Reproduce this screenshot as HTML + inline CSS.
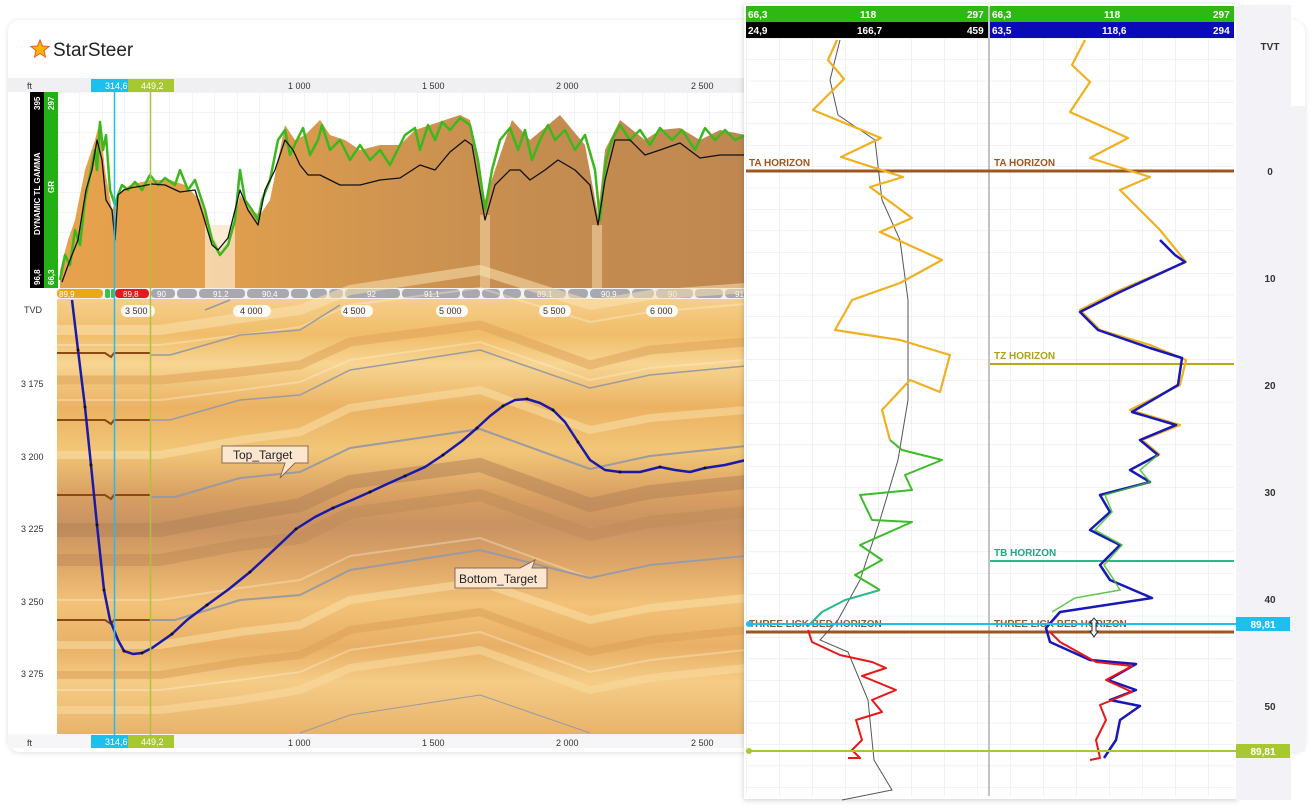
<!DOCTYPE html>
<html><head><meta charset="utf-8">
<style>
html,body{margin:0;padding:0;background:#fff;}
body{width:1314px;height:811px;position:relative;overflow:hidden;font-family:"Liberation Sans",sans-serif;}
.card{position:absolute;left:8px;top:20px;width:1297px;height:732px;background:#fff;border-radius:12px;box-shadow:0 1px 6px rgba(0,0,0,.12);overflow:hidden;}
svg text{font-family:"Liberation Sans",sans-serif;}
</style></head><body>
<div class="card"></div>
<svg width="1314" height="811" style="position:absolute;left:0;top:0">
<defs>
<linearGradient id="gfill" x1="0" y1="0" x2="1" y2="0">
<stop offset="0" stop-color="#e6a14c"/><stop offset=".2" stop-color="#e2a04c"/><stop offset=".5" stop-color="#cf9450"/><stop offset=".7" stop-color="#c58c50"/><stop offset="1" stop-color="#c08850"/>
</linearGradient>
<pattern id="grid" width="33" height="21.4" patternUnits="userSpaceOnUse" x="746" y="38">
<path d="M0 0H33M0 0V21.4" stroke="#e6e4e6" stroke-width="1" fill="none"/>
</pattern>
<pattern id="lgrid" width="22.5" height="20" patternUnits="userSpaceOnUse" x="57" y="92">
<path d="M0 0H22.5M0 0V20" stroke="#e9e9ec" stroke-width="1" fill="none"/>
</pattern>
<linearGradient id="strata" x1="0" y1="0" x2="0" y2="1">
<stop offset="0" stop-color="#f6cf8a"/><stop offset=".08" stop-color="#f0bd6a"/><stop offset=".15" stop-color="#f7d592"/><stop offset=".25" stop-color="#ebb262"/><stop offset=".35" stop-color="#f2c678"/><stop offset=".45" stop-color="#d9a062"/><stop offset=".52" stop-color="#c89262"/><stop offset=".6" stop-color="#dca466"/><stop offset=".7" stop-color="#f2c278"/><stop offset=".8" stop-color="#e8b066"/><stop offset=".88" stop-color="#f5cc86"/><stop offset="1" stop-color="#e8b36c"/>
</linearGradient>
</defs>

<polygon points="40,40 42.5,46 49,46.5 44,50.5 45.5,57 40,53.5 34.5,57 36,50.5 31,46.5 37.5,46" fill="#f7b500" stroke="#f05a22" stroke-width="1"/>
<text x="53" y="56" font-size="19" fill="#222">StarSteer</text>

<rect x="8" y="78" width="740" height="14" fill="#f0f0f2"/>
<text x="27" y="89" font-size="9" fill="#333">ft</text>
<rect x="91" y="79" width="37" height="13" fill="#1ebfee"/><rect x="128" y="79" width="46" height="13" fill="#a8c832"/>
<text x="105" y="89" font-size="9" fill="#fff">314,6</text><text x="141" y="89" font-size="9" fill="#fff">449,2</text>
<g font-size="9" fill="#333"><text x="288" y="89">1 000</text><text x="422" y="89">1 500</text><text x="556" y="89">2 000</text><text x="691" y="89">2 500</text></g>

<rect x="57" y="92" width="689" height="196" fill="url(#lgrid)"/>
<rect x="30" y="92" width="14" height="196" fill="#000"/>
<rect x="44" y="92" width="14" height="196" fill="#22b014"/>
<g font-size="8" fill="#fff" font-weight="bold">
<text transform="translate(40,235) rotate(-90)">DYNAMIC TL GAMMA</text>
<text transform="translate(40,110) rotate(-90)">395</text>
<text transform="translate(40,285) rotate(-90)">96,8</text>
<text transform="translate(54,110) rotate(-90)">297</text>
<text transform="translate(54,193) rotate(-90)">GR</text>
<text transform="translate(54,285) rotate(-90)">66,3</text>
</g>
<path d="M60,288 L60,270 L68,240 L75,220 L85,170 L95,140 L100,120 L105,170 L112,210 L117,200 L122,190 L130,185 L150,180 L170,180 L185,185 L200,200 L210,230 L220,250 L230,240 L240,195 L250,210 L260,215 L270,200 L285,125 L295,140 L305,135 L320,120 L330,135 L345,140 L360,150 L380,145 L400,145 L415,130 L430,125 L460,115 L470,120 L485,200 L495,170 L512,120 L530,140 L548,125 L560,115 L585,145 L598,215 L605,150 L620,120 L645,140 L660,130 L680,128 L700,140 L720,130 L746,135 L746,288 Z" fill="url(#gfill)"/>
<rect x="205" y="225" width="30" height="63" fill="#fbe6c6" opacity=".75"/>
<rect x="480" y="215" width="10" height="73" fill="#f3d3a0" opacity=".6"/>
<rect x="592" y="225" width="10" height="63" fill="#f3d3a0" opacity=".6"/>
<path d="M60,280 L65,255 L70,265 L75,230 L80,245 L85,200 L90,175 L95,150 L97,170 L100,122 L103,150 L106,135 L110,190 L115,205 L118,195 L122,185 L128,190 L135,182 L142,190 L150,175 L158,185 L165,178 L175,185 L180,170 L188,190 L195,180 L200,195 L205,210 L212,240 L220,255 L228,245 L235,220 L240,170 L245,200 L252,210 L258,220 L262,200 L270,180 L278,140 L285,130 L290,155 L297,140 L303,128 L310,155 L318,140 L322,125 L330,150 L340,140 L350,160 L360,145 L370,160 L380,150 L390,165 L400,145 L405,135 L415,128 L420,150 L428,125 L435,140 L442,122 L450,130 L460,118 L470,125 L478,160 L485,210 L492,170 L500,140 L510,128 L518,150 L525,130 L532,160 L540,140 L548,125 L555,140 L565,130 L575,150 L585,135 L595,170 L600,220 L606,160 L612,140 L620,125 L630,140 L640,130 L650,145 L660,128 L672,140 L682,130 L695,150 L705,128 L715,140 L725,130 L735,140 L746,135" fill="none" stroke="#3cb81e" stroke-width="2.5" stroke-linejoin="round"/>
<path d="M62,282 L70,260 L78,240 L86,190 L92,170 L97,140 L102,160 L106,200 L112,210 L115,240 L118,195 L124,190 L130,188 L142,186 L152,184 L165,185 L180,192 L195,190 L203,215 L212,245 L218,250 L228,238 L240,190 L248,210 L258,225 L265,190 L275,170 L285,140 L293,150 L300,165 L308,175 L320,175 L340,185 L360,185 L380,180 L400,178 L420,165 L435,170 L450,152 L465,140 L472,145 L485,220 L495,185 L510,170 L520,170 L530,180 L545,170 L558,160 L575,170 L590,185 L598,225 L605,180 L615,140 L630,140 L645,155 L660,150 L680,143 L700,158 L720,155 L746,155" fill="none" stroke="#111" stroke-width="1.3" stroke-linejoin="round"/>

<rect x="57" y="288" width="689" height="11" fill="#f2f2f4"/>
<g font-size="8" fill="#fff">
<rect x="57" y="289" width="46" height="9" rx="4" fill="#e8a81a"/><text x="59" y="297">89,9</text>
<rect x="105" y="289" width="5" height="9" rx="2" fill="#3cc04a"/><rect x="111" y="289" width="3" height="9" rx="1" fill="#3cc04a"/>
<rect x="115" y="289" width="34" height="9" rx="4" fill="#e51a1a"/><text x="123" y="297">89,8</text>
<g fill="#a8a8ae">
<rect x="151" y="289" width="24" height="9" rx="4"/><rect x="177" y="289" width="20" height="9" rx="4"/><rect x="199" y="289" width="46" height="9" rx="4"/><rect x="247" y="289" width="42" height="9" rx="4"/><rect x="291" y="289" width="17" height="9" rx="4"/><rect x="310" y="289" width="17" height="9" rx="4"/><rect x="329" y="289" width="14" height="9" rx="4"/><rect x="345" y="289" width="55" height="9" rx="4"/><rect x="402" y="289" width="58" height="9" rx="4"/><rect x="462" y="289" width="18" height="9" rx="4"/><rect x="482" y="289" width="18" height="9" rx="4"/><rect x="503" y="289" width="18" height="9" rx="4"/><rect x="524" y="289" width="42" height="9" rx="4"/><rect x="568" y="289" width="20" height="9" rx="4"/><rect x="590" y="289" width="40" height="9" rx="4"/><rect x="632" y="289" width="22" height="9" rx="4"/><rect x="656" y="289" width="37" height="9" rx="4"/><rect x="695" y="289" width="28" height="9" rx="4"/><rect x="725" y="289" width="21" height="9" rx="4"/>
</g>
<text x="157" y="297">90</text><text x="213" y="297">91,2</text><text x="262" y="297">90,4</text><text x="367" y="297">92</text><text x="424" y="297">91,1</text><text x="537" y="297">89,1</text><text x="601" y="297">90,9</text><text x="668" y="297">90</text><text x="735" y="297">91</text>
</g>

<rect x="57" y="299" width="689" height="435" fill="url(#strata)"/>
<g fill="none" stroke-linejoin="round" opacity=".55">
<path d="M57,330 H160 L240,318 L300,310 L350,290 L480,270 L590,305 L650,295 L746,288" stroke="#fbe2b0" stroke-width="10"/>
<path d="M57,380 H160 L240,372 L300,365 L350,342 L480,325 L590,365 L650,350 L746,342" stroke="#e0a35a" stroke-width="9"/>
<path d="M57,455 H160 L240,440 L300,432 L350,408 L480,390 L590,430 L650,418 L746,410" stroke="#fae0a8" stroke-width="8"/>
<path d="M57,530 H160 L240,515 L300,505 L350,482 L480,465 L590,505 L650,492 L746,482" stroke="#b58458" stroke-width="14"/>
<path d="M57,560 H160 L240,545 L300,538 L350,513 L480,495 L590,535 L650,522 L746,512" stroke="#c08c5a" stroke-width="12"/>
<path d="M57,645 H160 L240,632 L300,625 L350,600 L480,582 L590,620 L650,608 L746,598" stroke="#fbe0a6" stroke-width="8"/>
<path d="M57,675 H160 L240,662 L300,655 L350,630 L480,612 L590,652 L650,640 L746,630" stroke="#dca15a" stroke-width="8"/>
<path d="M57,710 H160 L240,700 L300,690 L350,668 L480,650 L590,690 L650,678 L746,668" stroke="#fbdca0" stroke-width="8"/>
</g>
<g fill="none" stroke-linejoin="round" opacity=".35" stroke="#fff3d6" stroke-width="2">
<path d="M57,345 H160 L240,335 L300,327 L350,305 L480,288 L590,322 L650,312 L746,304"/>
<path d="M57,400 H160 L240,390 L300,382 L350,360 L480,342 L590,380 L650,368 L746,360"/>
<path d="M57,600 H160 L240,588 L300,580 L350,556 L480,538 L590,578 L650,565 L746,556"/>
<path d="M57,690 H160 L240,680 L300,672 L350,650 L480,632 L590,672 L650,660 L746,650"/>
</g>
<g fill="none" stroke="#9a9aa2" stroke-linejoin="round">
<path d="M205,310 L230,300" stroke-width="1.5"/>
<path d="M150,355 H170 L240,335 L300,330 L340,305" stroke-width="1.5"/>
<path d="M150,420 H170 L240,400 L300,395 L350,370 L480,350 L590,388 L650,375 L746,366" stroke-width="1.5"/>
<path d="M150,497 H175 L240,478 L300,472 L350,448 L480,429 L590,469 L650,456 L746,446" stroke-width="2"/>
<path d="M150,620 H175 L240,600 L300,595 L350,570 L480,550 L590,578 L650,565 L746,556" stroke-width="2"/>
<path d="M300,733 L350,715 L480,695 L590,733" stroke-width="1"/>
</g>
<g fill="none" stroke="#8b4a14" stroke-width="2">
<path d="M57,353 H105 L111,357 L114,353 H150"/><path d="M57,420 H105 L111,424 L114,420 H150"/><path d="M57,495 H105 L111,499 L114,495 H150"/><path d="M57,620 H105 L111,624 L114,620 H150"/>
</g>
<g fill="#fff" opacity=".9">
<rect x="121" y="305" width="34" height="12" rx="6"/><rect x="233" y="305" width="38" height="12" rx="6"/><rect x="341" y="305" width="32" height="12" rx="6"/><rect x="436" y="305" width="32" height="12" rx="6"/><rect x="539" y="305" width="32" height="12" rx="6"/><rect x="646" y="305" width="32" height="12" rx="6"/>
</g>
<g font-size="9" fill="#333"><text x="125" y="314">3 500</text><text x="240" y="314">4 000</text><text x="343" y="314">4 500</text><text x="439" y="314">5 000</text><text x="543" y="314">5 500</text><text x="650" y="314">6 000</text></g>
<g font-size="9" fill="#333"><text x="24" y="313">TVD</text><text x="21" y="387">3 175</text><text x="21" y="460">3 200</text><text x="21" y="532">3 225</text><text x="21" y="605">3 250</text><text x="21" y="677">3 275</text></g>

<g font-size="12" fill="#222">
<path d="M222,446 H308 V463 H295 L280,478 L285,463 H222 Z" fill="#fde6d0" stroke="#8a6a50" stroke-width="1"/>
<text x="233" y="459">Top_Target</text>
<path d="M455,568 H520 L535,560 L532,568 H547 V588 H455 Z" fill="#fde6d0" stroke="#8a6a50" stroke-width="1"/>
<text x="459" y="583">Bottom_Target</text>
</g>

<path d="M72,300 L78,350 L85,407 L91,465 L97,525 L104,590 L110,620 L118,640 L124,651 L133,654 L142,653 L152,648 L162,641 L172,634 L187,620 L207,605 L229,589 L250,572 L263,560 L278,546 L296,529 L315,517 L333,508 L352,500 L370,492 L385,485 L405,476 L425,467 L443,455 L462,441 L477,428 L490,416 L503,406 L515,400 L527,399 L540,403 L553,410 L565,422 L578,442 L590,460 L605,470 L620,472 L640,472 L660,467 L675,470 L690,472 L705,468 L725,465 L746,460" fill="none" stroke="#1a1aa8" stroke-width="2.5" stroke-linejoin="round"/>
<g fill="#111">
<circle cx="78" cy="350" r="1.5"/><circle cx="85" cy="407" r="1.5"/><circle cx="91" cy="465" r="1.5"/><circle cx="97" cy="525" r="1.5"/><circle cx="104" cy="590" r="1.5"/><circle cx="124" cy="651" r="1.5"/><circle cx="142" cy="653" r="1.5"/><circle cx="172" cy="634" r="1.5"/><circle cx="207" cy="605" r="1.5"/><circle cx="250" cy="572" r="1.5"/><circle cx="296" cy="529" r="1.5"/><circle cx="333" cy="508" r="1.5"/><circle cx="370" cy="492" r="1.5"/><circle cx="405" cy="476" r="1.5"/><circle cx="443" cy="455" r="1.5"/><circle cx="477" cy="428" r="1.5"/><circle cx="503" cy="406" r="1.5"/><circle cx="527" cy="399" r="1.5"/><circle cx="553" cy="410" r="1.5"/><circle cx="578" cy="442" r="1.5"/><circle cx="620" cy="472" r="1.5"/><circle cx="660" cy="467" r="1.5"/><circle cx="705" cy="468" r="1.5"/>
</g>

<rect x="8" y="734" width="740" height="14" fill="#f6f6f8"/>
<text x="27" y="746" font-size="9" fill="#333">ft</text>
<rect x="91" y="735" width="37" height="13" fill="#1ebfee"/><rect x="128" y="735" width="46" height="13" fill="#a8c832"/>
<text x="105" y="745" font-size="9" fill="#fff">314,6</text><text x="141" y="745" font-size="9" fill="#fff">449,2</text>
<g font-size="9" fill="#333"><text x="288" y="746">1 000</text><text x="422" y="746">1 500</text><text x="556" y="746">2 000</text><text x="691" y="746">2 500</text></g>

<line x1="114.5" y1="92" x2="114.5" y2="736" stroke="#1ebfee" stroke-width="1.5"/>
<line x1="150.5" y1="92" x2="150.5" y2="736" stroke="#a8c832" stroke-width="1.5"/>

<rect x="744" y="4" width="494" height="795" fill="#fff" style="filter:drop-shadow(0 1px 3px rgba(0,0,0,.2))"/>
<rect x="746" y="38" width="488" height="758" fill="url(#grid)"/>
<line x1="989" y1="7" x2="989" y2="796" stroke="#c4c2c4" stroke-width="2"/>
<rect x="746" y="6" width="242" height="16" fill="#2eb812"/><rect x="990" y="6" width="244" height="16" fill="#2eb812"/>
<rect x="746" y="22" width="242" height="16" fill="#000"/><rect x="990" y="22" width="244" height="16" fill="#0a0ab8"/>
<g font-size="10" fill="#fff" font-weight="bold">
<text x="748" y="18">66,3</text><text x="860" y="18">118</text><text x="967" y="18">297</text>
<text x="992" y="18">66,3</text><text x="1104" y="18">118</text><text x="1213" y="18">297</text>
<text x="748" y="34">24,9</text><text x="857" y="34">166,7</text><text x="967" y="34">459</text>
<text x="992" y="34">63,5</text><text x="1102" y="34">118,6</text><text x="1213" y="34">294</text>
</g>
<rect x="1236" y="5" width="55" height="795" fill="#f3f2f6"/>
<g font-size="10" fill="#333" font-weight="bold" text-anchor="middle">
<text x="1270" y="50">TVT</text><text x="1270" y="175">0</text><text x="1270" y="282">10</text><text x="1270" y="389">20</text><text x="1270" y="496">30</text><text x="1270" y="603">40</text><text x="1270" y="710">50</text>
</g>
<rect x="1291" y="106" width="14" height="646" fill="#f3f3f5"/>

<g stroke="#9c5620" stroke-width="3"><line x1="746" y1="171" x2="1234" y2="171"/><line x1="746" y1="632" x2="1234" y2="632"/></g>
<line x1="990" y1="364" x2="1234" y2="364" stroke="#b8a818" stroke-width="2"/>
<line x1="990" y1="561" x2="1234" y2="561" stroke="#2ab888" stroke-width="2"/>
<g font-size="10" font-weight="bold">
<text x="749" y="166" fill="#9c5620">TA HORIZON</text><text x="994" y="166" fill="#9c5620">TA HORIZON</text>
<text x="994" y="359" fill="#b0a018">TZ HORIZON</text>
<text x="994" y="556" fill="#20a880">TB HORIZON</text>
<text x="749" y="627" fill="#8a5a3a">THREE LICK BED HORIZON</text><text x="994" y="627" fill="#8a5a3a">THREE LICK BED HORIZON</text>
</g>

<path d="M840,40 L830,80 L838,115 L875,140 L882,200 L900,240 L908,300 L908,400 L898,460 L880,520 L860,580 L838,620 L820,640 L848,652 L868,700 L874,760 L892,790 L842,800" fill="none" stroke="#555" stroke-width="1"/>
<path d="M837,40 L828,60 L844,79 L813,110 L881,138 L841,157 L903,177 L870,187 L912,218 L880,232 L942,260 L900,283 L852,300 L835,330 L900,340 L950,355 L940,392 L910,380 L882,410 L890,440" fill="none" stroke="#f0b020" stroke-width="2.2" stroke-linejoin="round"/>
<path d="M890,440 L902,450 L942,460 L905,475 L912,490 L860,495 L872,520 L912,522 L860,545 L882,560 L855,575 L880,590" fill="none" stroke="#3cbc28" stroke-width="2" stroke-linejoin="round"/>
<path d="M880,590 L845,600 L822,612 L808,626" fill="none" stroke="#2ab888" stroke-width="2"/>
<path d="M808,630 L812,642 L840,655 L872,662 L886,668 L862,676 L896,690 L872,700 L882,712 L856,720 L862,740 L852,750 L860,758 L848,758" fill="none" stroke="#e81818" stroke-width="2" stroke-linejoin="round"/>

<path d="M1085,40 L1072,65 L1090,82 L1070,112 L1128,138 L1090,158 L1150,177 L1120,190 L1160,230 L1186,262 L1120,290 L1080,310 L1100,330 L1150,345 L1186,360 L1180,385 L1130,410 L1180,425 L1142,440 L1160,455" fill="none" stroke="#f0b020" stroke-width="2.2" stroke-linejoin="round"/>
<path d="M1160,240 L1175,255 L1185,262 L1120,292 L1080,312 L1098,330 L1150,348 L1182,358 L1178,385 L1132,412 L1176,425 L1140,440 L1158,455 L1130,470 L1150,482 L1100,495 L1110,512 L1090,530 L1120,545 L1100,565 L1110,580 L1152,598 L1060,612 L1046,628 L1050,642 L1090,660 L1136,664 L1108,680 L1136,690 L1110,700 L1140,706 L1120,720 L1116,740 L1104,758" fill="none" stroke="#1818b8" stroke-width="2.5" stroke-linejoin="round"/>
<path d="M1158,455 L1140,470 L1150,482 L1105,495 L1112,512 L1095,530 L1122,545 L1104,565 L1114,580 L1120,590 L1075,598 L1052,612" fill="none" stroke="#3cbc28" stroke-width="1.6" opacity=".8"/>
<path d="M1050,632 L1060,642 L1096,662 L1132,666 L1106,680 L1132,692 L1100,705 L1106,720 L1096,740 L1100,758 L1090,760" fill="none" stroke="#e81818" stroke-width="2" stroke-linejoin="round"/>

<line x1="746" y1="624" x2="1236" y2="624" stroke="#1ebfee" stroke-width="2"/>
<circle cx="749" cy="624" r="3" fill="#1ebfee"/>
<rect x="1236" y="617" width="54" height="14" fill="#1ebfee"/><text x="1263" y="628" font-size="10" fill="#fff" text-anchor="middle" font-weight="bold">89,81</text>
<line x1="746" y1="751" x2="1236" y2="751" stroke="#a8c832" stroke-width="2"/>
<circle cx="749" cy="751" r="3" fill="#a8c832"/>
<rect x="1236" y="744" width="54" height="14" fill="#a8c832"/><text x="1263" y="755" font-size="10" fill="#fff" text-anchor="middle" font-weight="bold">89,81</text>
<path d="M1094,618 L1098,623 L1096,623 L1096,631 L1098,631 L1094,637 L1090,631 L1092,631 L1092,623 L1090,623 Z" fill="#fff" stroke="#222" stroke-width="1"/>
</svg>
</body></html>
